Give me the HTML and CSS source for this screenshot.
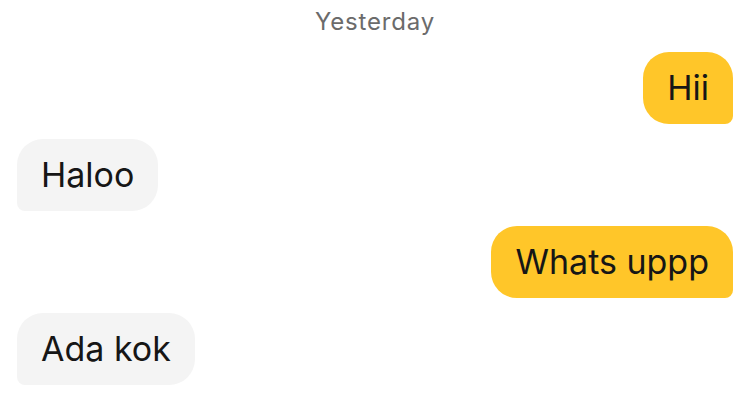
FILE: index.html
```html
<!DOCTYPE html>
<html lang="en">
<head>
    <meta charset="UTF-8">
    <meta name="viewport" content="width=device-width, initial-scale=1.0">
    <title>Chat</title>
    <link rel="stylesheet" href="styles.css">
</head>
<body>
    <div class="chat">
        <div class="day">Yesterday</div>
        <div class="msg out">Hii</div>
        <div class="msg in">Haloo</div>
        <div class="msg out">Whats uppp</div>
        <div class="msg in">Ada kok</div>
    </div>
</body>
</html>
```

FILE: styles.css
```css
body {
    font-family: 'Inter', 'Noto Sans', sans-serif;
    background-color: #ffffff;
    color: #161616;
    margin: 0;
    padding: 0;
}
.chat {
    display: flex;
    flex-direction: column;
    gap: 15px;
    padding: 0 17px;
}
.day {
    text-align: center;
    font-size: 24px;
    letter-spacing: 0.8px;
    color: #6b6b6b;
    line-height: 44px;
    margin-bottom: -7px;
}
.msg {
    height: 72px;
    line-height: 72px;
    padding: 0 24px;
    font-size: 34px;
    white-space: nowrap;
}
.out {
    align-self: flex-end;
    background-color: #ffc629;
    border-radius: 26px 26px 8px 26px;
}
.in {
    align-self: flex-start;
    background-color: #f4f4f4;
    border-radius: 26px 26px 26px 8px;
}
```
